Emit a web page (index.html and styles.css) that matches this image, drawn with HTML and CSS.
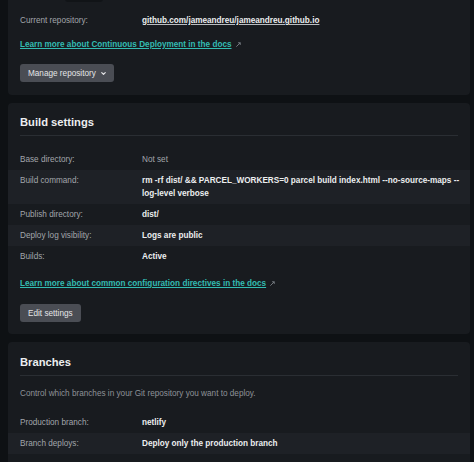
FILE: index.html
```html
<!DOCTYPE html>
<html lang="en">
<head>
<meta charset="utf-8">
<title>Deploy settings</title>
<link rel="stylesheet" href="styles.css">
</head>
<body>
<main class="page">
  <section class="card card-first">
    <div class="stub"></div>
    <dl class="rows">
      <div class="row"><dt>Current repository:</dt><dd><a class="repo" href="#">github.com/jameandreu/jameandreu.github.io</a></dd></div>
    </dl>
    <p class="doclink"><a href="#">Learn more about Continuous Deployment in the docs</a><svg class="ext" viewBox="0 0 8 8" width="7" height="7"><path d="M1.5 6.5 L6 2 M3.5 2 H6 V4.5" fill="none" stroke="currentColor" stroke-width="1"/></svg></p>
    <button class="btn" type="button">Manage repository <svg class="chev" viewBox="0 0 8 8" width="7" height="7"><path d="M2 3 L4 5 L6 3" fill="none" stroke="currentColor" stroke-width="1.4" stroke-linecap="round" stroke-linejoin="round"/></svg></button>
  </section>

  <section class="card">
    <h2 class="card-title">Build settings</h2>
    <dl class="rows rows-spaced">
      <div class="row"><dt>Base directory:</dt><dd class="muted">Not set</dd></div>
      <div class="row"><dt>Build command:</dt><dd>rm -rf dist/ &amp;&amp; PARCEL_WORKERS=0 parcel build index.html --no-source-maps <span class="nw">--</span>log-level verbose</dd></div>
      <div class="row"><dt>Publish directory:</dt><dd>dist/</dd></div>
      <div class="row"><dt>Deploy log visibility:</dt><dd>Logs are public</dd></div>
      <div class="row"><dt>Builds:</dt><dd>Active</dd></div>
    </dl>
    <p class="doclink doclink-2"><a href="#">Learn more about common configuration directives in the docs</a><svg class="ext" viewBox="0 0 8 8" width="7" height="7"><path d="M1.5 6.5 L6 2 M3.5 2 H6 V4.5" fill="none" stroke="currentColor" stroke-width="1"/></svg></p>
    <button class="btn btn-2" type="button">Edit settings</button>
  </section>

  <section class="card">
    <h2 class="card-title title-3">Branches</h2>
    <p class="desc">Control which branches in your Git repository you want to deploy.</p>
    <dl class="rows rows-branches">
      <div class="row"><dt>Production branch:</dt><dd>netlify</dd></div>
      <div class="row"><dt>Branch deploys:</dt><dd>Deploy only the production branch</dd></div>
    </dl>
  </section>
</main>
</body>
</html>
```

FILE: styles.css
```css
* { box-sizing: border-box; }

html, body {
  margin: 0;
  padding: 0;
  background: #0e1114;
  height: 100%;
  overflow: hidden;
}

body {
  font-family: "Liberation Sans", Arial, sans-serif;
  font-size: 8.2px;
  color: #e6e7e9;
}

.page {
  padding: 0 4px 0 8px;
}

.card {
  background: #181b1f;
  border-radius: 4px;
  padding: 12px 12px 12px;
  margin-bottom: 8px;
}

.card-first {
  margin-top: -20px;
  padding-top: 0;
  padding-bottom: 13px;
  border-radius: 0 0 4px 4px;
}

.stub {
  width: 38px;
  height: 22px;
  margin-left: 45px;
  background: #111417;
  border-radius: 0 0 3px 3px;
}

.rows {
  margin: 8px -12px 0;
  padding: 0;
}

.rows-spaced { margin-top: 13px; }
.rows-branches { margin-top: 12px; }

.row {
  display: flex;
  padding: 4px 8px 4px 12px;
  line-height: 13px;
}

.row:nth-child(even) {
  background: #1e2126;
}

.row dt {
  flex: 0 0 122px;
  color: #a2a6ab;
  margin: 0;
}

.row dd {
  flex: 1;
  margin: 0;
  font-weight: bold;
  color: #eceef0;
}

.row dd.muted {
  font-weight: normal;
  color: #a2a6ab;
}

.nw { white-space: nowrap; }

.repo {
  color: #eceef0;
  text-decoration: underline;
  text-decoration-color: #b9bcc0;
}

.doclink {
  margin: 7px 0 0;
  line-height: 13px;
  display: flex;
  align-items: center;
  gap: 3px;
}

.doclink-2 { margin-top: 10px; }

.doclink a {
  color: #33bcb2;
  font-weight: bold;
  text-decoration: underline;
  text-underline-offset: 1px;
}

.ext {
  color: #7c8188;
  flex: none;
}

.btn {
  display: inline-flex;
  align-items: center;
  gap: 4px;
  height: 18px;
  margin-top: 13px;
  padding: 0 7px 0 8px;
  border: 0;
  border-radius: 3px;
  background: #4a4d54;
  color: #e4e5e7;
  font: inherit;
  line-height: 13px;
}

.btn-2 { margin-top: 14px; padding: 0 8px; }

.chev { color: #e4e5e7; }

.card-title {
  margin: 0;
  font-size: 11.2px;
  line-height: 14px;
  font-weight: bold;
  color: #eceef0;
  padding-bottom: 6px;
  border-bottom: 1px solid #2a2e33;
}

.title-3 { margin-top: 1px; }

.desc {
  margin: 11px 0 0;
  line-height: 13px;
  color: #8e9298;
}
```
